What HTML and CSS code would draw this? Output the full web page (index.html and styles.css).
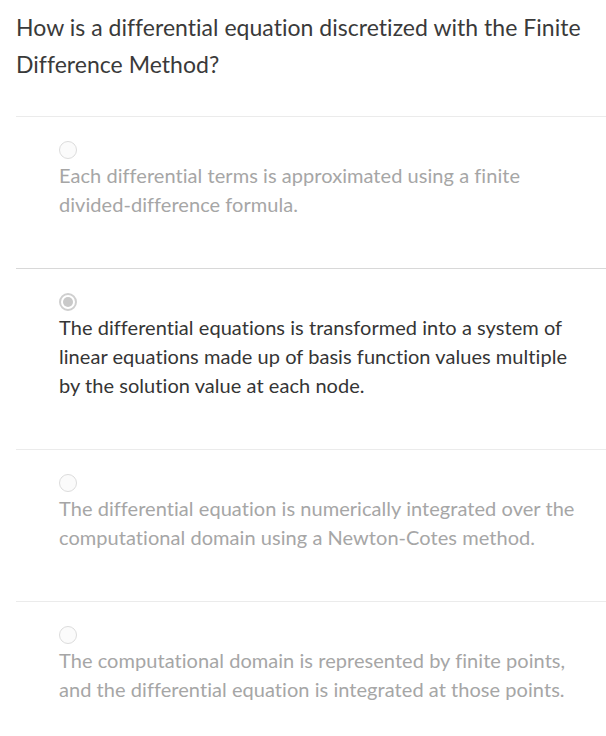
FILE: index.html
```html
<!DOCTYPE html>
<html>
<head>
<meta charset="utf-8">
<link rel="stylesheet" href="styles.css">
</head>
<body>
<div class="quiz">
  <div class="question">How is a differential equation discretized with the Finite Difference Method?</div>
  <div class="answers">
    <div class="answer">
      <span class="radio"></span>
      <div class="text">Each differential terms is approximated using a finite divided-difference formula.</div>
    </div>
    <div class="answer selected">
      <span class="radio checked"></span>
      <div class="text">The differential equations is transformed into a system of linear equations made up of basis function values multiple by the solution value at each node.</div>
    </div>
    <div class="answer">
      <span class="radio"></span>
      <div class="text">The differential equation is numerically integrated over the computational domain using a Newton-Cotes method.</div>
    </div>
    <div class="answer">
      <span class="radio"></span>
      <div class="text">The computational domain is represented by finite points, and the differential equation is integrated at those points.</div>
    </div>
  </div>
</div>
</body>
</html>
```
FILE: styles.css
```css
html, body {
  margin: 0;
  padding: 0;
  background: #ffffff;
}
body {
  font-family: Lato, "Open Sans", sans-serif;
}
.quiz {
  padding-left: 16px;
}
.question {
  font-size: 23px;
  line-height: 37px;
  letter-spacing: 0.03px;
  color: #3a3a3a;
  padding-top: 9px;
  padding-right: 20px;
  padding-bottom: 33px;
}
.answers {
  display: flex;
  flex-direction: column;
}
.answer {
  border-top: 1px solid #ebebeb;
  padding: 24px 20px 49px 43px;
  display: flex;
  flex-direction: column;
  align-items: flex-start;
}
.answer.selected {
  border-top-color: #d8d8d8;
}
.radio {
  width: 18px;
  height: 18px;
  box-sizing: border-box;
  border-radius: 50%;
  border: 1px solid #dcdcdc;
  background: #fbfbfb;
  margin-bottom: 2px;
  display: flex;
  align-items: center;
  justify-content: center;
}
.radio.checked {
  border: 2px solid #cfcfcf;
  background: #ffffff;
}
.radio.checked::after {
  content: "";
  width: 10px;
  height: 10px;
  border-radius: 50%;
  background: #c9c9c9;
}
.text {
  font-size: 20px;
  line-height: 29px;
  letter-spacing: 0.05px;
  color: #a6a6a6;
}
.selected .text {
  color: #353535;
}
```
